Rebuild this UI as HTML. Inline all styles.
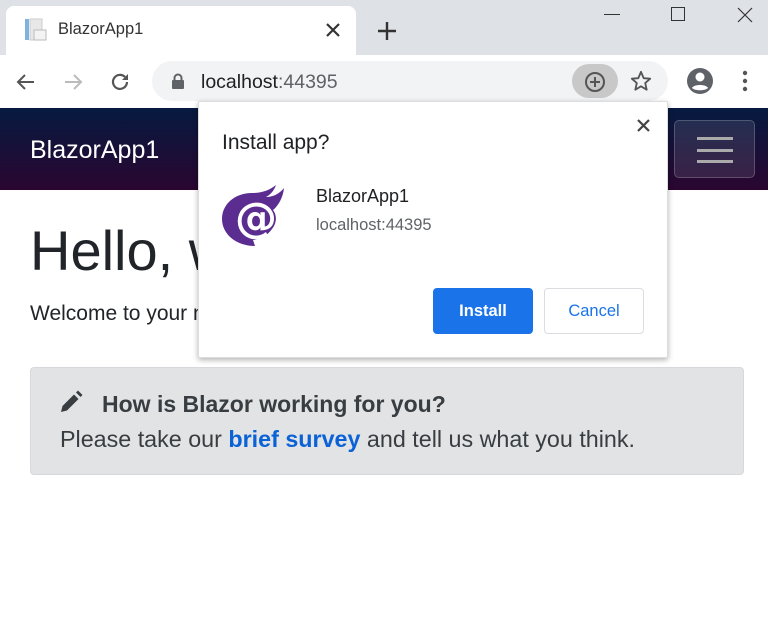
<!DOCTYPE html>
<html><head><style>
*{margin:0;padding:0;box-sizing:border-box}
body{width:768px;height:620px;overflow:hidden;background:#fff;font-family:"Liberation Sans",sans-serif;position:relative}
.abs{position:absolute}
</style></head><body>
<div class="abs" style="left:0;top:0;width:768px;height:55px;background:#dee1e6"></div>
<div class="abs" style="left:6px;top:6px;width:350px;height:50px;background:#fff;border-radius:8px 8px 0 0"></div>
<svg class="abs" style="left:24px;top:18px" width="24" height="24" viewBox="0 0 24 24"><rect x="1" y="1" width="4" height="21" fill="#7fb2e0"/><rect x="6" y="1" width="12" height="21" fill="#e8e8e8" stroke="#ccc"/><rect x="10" y="12" width="12" height="10" fill="#f3f3f3" stroke="#bbb"/></svg>
<div class="abs" style="left:58px;top:20px;font-size:16.5px;color:#333">BlazorApp1</div>
<svg class="abs" style="left:326px;top:23px" width="14" height="14"><path d="M1 1l12 12M13 1L1 13" stroke="#333" stroke-width="2.2"/></svg>
<svg class="abs" style="left:378px;top:22px" width="18" height="18"><path d="M9 0v18M0 9h18" stroke="#333" stroke-width="2.4"/></svg>
<div class="abs" style="left:604px;top:14px;width:16px;height:1px;background:#333"></div>
<div class="abs" style="left:671px;top:7px;width:14px;height:14px;border:1px solid #333"></div>
<svg class="abs" style="left:737px;top:7px" width="16" height="16"><path d="M1 1l14 14M15 1L1 15" stroke="#333" stroke-width="1.2"/></svg>
<div class="abs" style="left:0;top:55px;width:768px;height:53px;background:#fff"></div>
<svg class="abs" style="left:14px;top:70px" width="24" height="24" viewBox="0 0 24 24"><path d="M20 12H5M11 5l-7 7 7 7" stroke="#555" stroke-width="2" fill="none"/></svg>
<svg class="abs" style="left:61px;top:70px" width="24" height="24" viewBox="0 0 24 24"><path d="M4 12h15M13 5l7 7-7 7" stroke="#bbb" stroke-width="2" fill="none"/></svg>
<svg class="abs" style="left:108px;top:70px" width="24" height="24" viewBox="0 0 24 24"><path d="M19 12a7 7 0 1 1-2-5" stroke="#555" stroke-width="2.2" fill="none"/><path d="M20 4v6h-6z" fill="#555"/></svg>
<div class="abs" style="left:152px;top:61px;width:516px;height:40px;background:#f1f3f4;border-radius:20px"></div>
<svg class="abs" style="left:171px;top:73px" width="14" height="16" viewBox="0 0 14 16"><path d="M3.5 7V5a3.5 3.5 0 0 1 7 0v2" stroke="#5f6368" stroke-width="2" fill="none"/><rect x="1" y="7" width="12" height="9" rx="1" fill="#5f6368"/></svg>
<div class="abs" style="left:201px;top:71px;font-size:19.5px;color:#202124">localhost<span style="color:#5f6368">:44395</span></div>
<div class="abs" style="left:572px;top:64px;width:46px;height:34px;background:#c8c8c8;border-radius:17px"></div>
<svg class="abs" style="left:584px;top:71px" width="22" height="22" viewBox="0 0 22 22"><circle cx="11" cy="11" r="9" stroke="#555" stroke-width="2" fill="none"/><path d="M11 6v10M6 11h10" stroke="#555" stroke-width="2"/></svg>
<svg class="abs" style="left:630px;top:70px" width="22" height="22" viewBox="0 0 24 24"><path d="M12 2l2.9 6.9 7.1.6-5.4 4.7 1.6 7.3L12 17.8 5.8 21.5l1.6-7.3L2 9.5l7.1-.6z" stroke="#555" stroke-width="2" fill="none" stroke-linejoin="round"/></svg>
<svg class="abs" style="left:686px;top:67px" width="28" height="28" viewBox="0 0 28 28"><circle cx="14" cy="14" r="13" fill="#5f6368"/><circle cx="14" cy="10" r="4.5" fill="#fff"/><path d="M6 21c2-4 14-4 16 0c-3 3-13 3-16 0z" fill="#fff"/></svg>
<svg class="abs" style="left:742px;top:70px" width="6" height="22"><circle cx="3" cy="3" r="2.2" fill="#555"/><circle cx="3" cy="11" r="2.2" fill="#555"/><circle cx="3" cy="19" r="2.2" fill="#555"/></svg>
<div class="abs" style="left:0;top:108px;width:768px;height:82px;background:linear-gradient(180deg,#061a40,#2a0630)"></div>
<div class="abs" style="left:30px;top:136px;font-size:25px;color:#fff">BlazorApp1</div>
<div class="abs" style="left:674px;top:120px;width:81px;height:58px;border:1px solid rgba(255,255,255,.2);border-radius:5px;background:rgba(255,255,255,.1)"></div>
<div class="abs" style="left:697px;top:137px;width:36px;height:3px;background:#aaa"></div>
<div class="abs" style="left:697px;top:149px;width:36px;height:3px;background:#aaa"></div>
<div class="abs" style="left:697px;top:160px;width:36px;height:3px;background:#aaa"></div>
<div class="abs" style="left:30px;top:218px;font-size:56px;color:#212529">Hello, world!</div>
<div class="abs" style="left:30px;top:302px;font-size:21px;color:#212529">Welcome to your new app.</div>
<div class="abs" style="left:30px;top:367px;width:714px;height:108px;background:#e2e3e5;border:1px solid #d6d8db;border-radius:4px"></div>
<svg class="abs" style="left:59px;top:390px" width="24" height="24" viewBox="0 0 24 24"><path d="M2 22l1.5-6L15 4.5l4.5 4.5L8 20.5z" fill="#383d41"/><path d="M17 2.5l2-2 4.5 4.5-2 2z" fill="#383d41"/></svg>
<div class="abs" style="left:102px;top:391px;font-size:23px;font-weight:bold;color:#383d41">How is Blazor working for you?</div>
<div class="abs" style="left:60px;top:426px;font-size:23.3px;color:#383d41">Please take our <b style="color:#0b62d6">brief survey</b> and tell us what you think.</div>
<div class="abs" style="left:198px;top:101px;width:470px;height:257px;background:#fff;border:1px solid #ddd;box-shadow:0 2px 6px rgba(0,0,0,.3);border-radius:2px"></div>
<div class="abs" style="left:222px;top:131px;font-size:21px;color:#202124">Install app?</div>
<svg class="abs" style="left:637px;top:119px" width="13" height="13"><path d="M1 1l11 11M12 1L1 12" stroke="#444" stroke-width="2.2"/></svg>
<svg class="abs" style="left:222px;top:184px" width="70" height="64" viewBox="0 0 70 64"><path d="M33 62C14 62 0 50 0 35 0 20 13 9 30 9c10 0 18-3 24-8-2 6-6 10-10 12 8 0 14-4 18-9-1 10-6 18-11 22 4 5 4 13-1 19-5 7-13 11-19 11z" fill="#5c2d91"/></svg>
<div class="abs" style="left:226px;top:191px;width:60px;text-align:center;font-size:42px;line-height:54px;color:#fff;font-family:'DejaVu Sans',sans-serif;font-weight:bold">@</div>
<div class="abs" style="left:316px;top:186px;font-size:18px;color:#202124">BlazorApp1</div>
<div class="abs" style="left:316px;top:216px;font-size:16.5px;color:#5f6368">localhost:44395</div>
<div class="abs" style="left:433px;top:288px;width:100px;height:46px;background:#1a73e8;border-radius:4px;color:#fff;font-size:16.5px;font-weight:bold;text-align:center;line-height:46px">Install</div>
<div class="abs" style="left:544px;top:288px;width:100px;height:46px;background:#fff;border:1px solid #dadce0;border-radius:4px;color:#1a73e8;font-size:16.5px;text-align:center;line-height:44px">Cancel</div>
</body></html>
